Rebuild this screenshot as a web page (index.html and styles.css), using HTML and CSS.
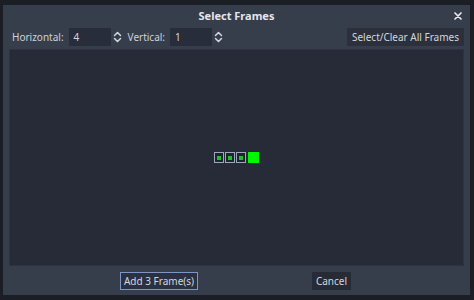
FILE: index.html
```html
<!DOCTYPE html>
<html>
<head>
<meta charset="utf-8">
<link rel="stylesheet" href="styles.css">
</head>
<body>
<div class="dialog">
  <div class="titlebar">
    <span class="title">Select Frames</span>
    <svg class="close" width="8" height="8" viewBox="0 0 8 8"><path d="M1 1 L7 7 M7 1 L1 7" stroke="#e6e8ec" stroke-width="1.7" stroke-linecap="round"/></svg>
  </div>
  <div class="toolbar">
    <span class="label first">Horizontal:</span>
    <div class="field">4</div>
    <svg class="spin" width="9" height="12" viewBox="0 0 9 12"><path d="M1.5 4.5 L4.5 1.5 L7.5 4.5 M1.5 7.5 L4.5 10.5 L7.5 7.5" fill="none" stroke="#d4d7dd" stroke-width="1.5" stroke-linecap="round" stroke-linejoin="round"/></svg>
    <span class="label">Vertical:</span>
    <div class="field">1</div>
    <svg class="spin" width="9" height="12" viewBox="0 0 9 12"><path d="M1.5 4.5 L4.5 1.5 L7.5 4.5 M1.5 7.5 L4.5 10.5 L7.5 7.5" fill="none" stroke="#d4d7dd" stroke-width="1.5" stroke-linecap="round" stroke-linejoin="round"/></svg>
    <div class="spacer"></div>
    <div class="btn flat">Select/Clear All Frames</div>
  </div>
  <div class="canvas">
    <div class="frames">
      <div class="frame"><div class="dot"></div></div>
      <div class="frame"><div class="dot"></div></div>
      <div class="frame"><div class="dot"></div></div>
      <div class="frame selected"></div>
    </div>
  </div>
  <div class="footer">
    <div class="btn primary">Add 3 Frame(s)</div>
    <div class="btn cancel">Cancel</div>
  </div>
</div>
</body>
</html>
```
FILE: styles.css
```css
html, body {
  margin: 0;
  padding: 0;
  background: #1b1e25;
  width: 474px;
  height: 300px;
  overflow: hidden;
  font-family: "Noto Sans", "Open Sans", sans-serif;
  font-size: 10px;
  color: #cdd1d8;
}
.dialog {
  margin: 5px 0 0 3px;
  width: 467px;
  height: 290px;
  background: #363d4b;
  display: flex;
  flex-direction: column;
  box-sizing: border-box;
  padding: 0 6px 5px 6px;
}
.titlebar {
  height: 20px;
  position: relative;
  display: flex;
  align-items: center;
  justify-content: center;
  margin: 0 -6px;
}
.title {
  font-weight: bold;
  font-size: 11px;
  color: #e4e6ea;
}
.close {
  position: absolute;
  right: 8px;
  top: 7px;
}
.toolbar {
  margin-top: 3px;
  height: 18px;
  display: flex;
  align-items: center;
  white-space: nowrap;
}
.label {
  margin-right: 5px;
}
.label.first {
  margin-left: 3px;
}
.field {
  width: 42px;
  height: 18px;
  box-sizing: border-box;
  background: #272d3a;
  padding-left: 5px;
  line-height: 18px;
  color: #d3d6dc;
}
.spin {
  margin: 0 6px 0 2px;
}
.spacer {
  flex: 1;
}
.btn {
  height: 18px;
  line-height: 18px;
  box-sizing: border-box;
  color: #d3d6dc;
  white-space: nowrap;
  text-align: center;
}
.btn.flat {
  background: #2b303c;
  width: 117px;
}
.canvas {
  margin-top: 3px;
  height: 217px;
  background: #262b37;
  border: 1px solid #2d3340;
  box-sizing: border-box;
  display: flex;
  align-items: center;
  justify-content: center;
}
.frames {
  display: flex;
  gap: 1px;
  margin-left: 0px;
  margin-top: 0px;
}
.frame {
  width: 10px;
  height: 11px;
  box-sizing: border-box;
  border: 1px solid #9aa8b8;
  background: #1c2630;
  display: flex;
  align-items: center;
  justify-content: center;
}
.dot {
  width: 4px;
  height: 4px;
  background: #22c028;
}
.frame.selected {
  width: 11px;
  margin-left: 1px;
  border: none;
  background: #00f500;
}
.footer {
  margin-top: 6px;
  height: 18px;
  display: flex;
}
.btn.primary {
  margin-left: 111px;
  width: 78px;
  background: #2a3142;
  border: 1px solid #7f96c4;
  line-height: 16px;
}
.btn.cancel {
  margin-left: 114px;
  width: 39px;
  background: #262b36;
}
```
